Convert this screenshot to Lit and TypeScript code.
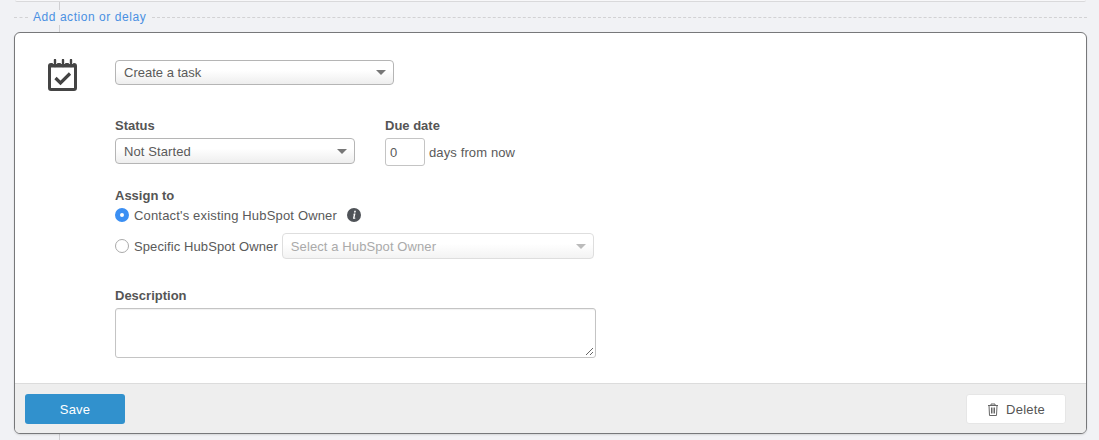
import { LitElement, html, css } from "lit";
import { customElement } from "lit/decorators.js";

@customElement("app-root")
export class AppRoot extends LitElement {
  static styles = css`
    :host {
      display: block;
      position: relative;
      width: 1099px;
      height: 440px;
      overflow: hidden;
      background: #f1f2f5;
      font-family: "Liberation Sans", Arial, sans-serif;
      font-size: 13px;
      color: #5a5a5a;
    }
    .connector {
      position: absolute;
      left: 59px;
      top: 2px;
      bottom: 0;
      width: 1px;
      background: #cfcfd2;
    }
    .prev {
      position: relative;
      box-sizing: border-box;
      height: 2px;
      margin: 0 13px 0 15px;
      background: #f7f7f9;
      border-bottom: 1px solid #d9d9db;
      border-radius: 0 0 4px 4px;
    }
    .add {
      position: relative;
      height: 30px;
      margin: 0 12px 0 14px;
      display: flex;
      align-items: center;
      gap: 5px;
      box-sizing: border-box;
      color: #4a90e2;
      font-size: 12px;
      letter-spacing: 0.55px;
    }
    .add span { background: #f1f2f5; padding: 0 1px 1px 0; }
    .dash { flex: 1; border-top: 1px dashed #d2d2d4; }
    .dash.short { flex: 0 0 14px; }
    .card {
      position: relative;
      margin: 0 12px 0 14px;
      height: 402px;
      box-sizing: border-box;
      background: #fff;
      border: 1px solid #77787a;
      border-radius: 6px;
      box-shadow: 0 1px 2px rgba(0, 0, 0, 0.12);
      display: flex;
      flex-direction: column;
      overflow: hidden;
    }
    .body {
      flex: 1;
      display: flex;
      padding: 27px 0 0 32px;
    }
    .icon { width: 32px; height: 32px; margin: -1px 36px 0 0; flex: none; }
    .icon svg { display: block; }
    .form { display: flex; flex-direction: column; align-items: flex-start; }
    .select {
      box-sizing: border-box;
      height: 26px;
      display: flex;
      align-items: center;
      justify-content: space-between;
      padding: 0 7px 0 8px;
      border: 1px solid #b5b5b5;
      border-radius: 4px;
      background: linear-gradient(#fff 40%, #eeeeee);
      color: #5a5a5a;
      font-size: 13px;
      letter-spacing: 0.1px;
    }
    .select.type { width: 279px; height: 25px; letter-spacing: 0; }
    .select.status { width: 240px; }
    .select.owner {
      width: 312px;
      margin-left: 4px;
      border-color: #dedede;
      color: #aaa;
      background: linear-gradient(#fff 40%, #f3f3f3);
    }
    .caret {
      width: 0;
      height: 0;
      border-left: 5px solid transparent;
      border-right: 5px solid transparent;
      border-top: 5.5px solid #777;
    }
    .owner .caret { border-top-color: #bbb; }
    .row { display: flex; gap: 30px; margin-top: 33px; }
    .label {
      display: block;
      font-weight: bold;
      font-size: 13px;
      line-height: 15px;
      color: #555;
    }
    .field .label { margin-bottom: 5px; }
    .due { display: flex; align-items: center; gap: 4px; letter-spacing: 0.12px; }
    .num {
      box-sizing: border-box;
      width: 40px;
      height: 28px;
      border: 1px solid #c4c4c4;
      border-radius: 3px;
      padding: 0 4px;
      display: flex;
      align-items: center;
      background: #fff;
    }
    .assign { margin-top: 22px; }
    .radio-row {
      display: flex;
      align-items: center;
      letter-spacing: 0.17px;
    }
    .radio-row.first { height: 20px; margin-top: 2px; }
    .radio-row.second { height: 26px; margin-top: 8px; letter-spacing: 0.1px; }
    .radio {
      box-sizing: border-box;
      width: 14px;
      height: 14px;
      border-radius: 50%;
      border: 1px solid #aaa;
      background: #fff;
      margin-right: 5px;
      flex: none;
    }
    .radio.on {
      border: 5px solid #3b8ff3;
    }
    .info {
      width: 14px;
      height: 14px;
      margin-left: 10px;
      display: block;
    }
    .desc { margin-top: 29px; }
    .desc .label { margin-bottom: 5px; }
    .ta {
      position: relative;
      box-sizing: border-box;
      width: 481px;
      height: 50px;
      border: 1px solid #c4c4c4;
      border-radius: 3px;
      box-shadow: inset 0 1px 1px rgba(0, 0, 0, 0.06);
    }
    .grip { position: absolute; right: 1px; bottom: 1px; display: block; }
    .footer {
      height: 50px;
      flex: none;
      box-sizing: border-box;
      border-top: 1px solid #dcdcdc;
      background: #eeeeee;
      display: flex;
      align-items: center;
      justify-content: space-between;
      padding: 0 20px 0 10px;
    }
    .btn {
      box-sizing: border-box;
      height: 30px;
      padding-top: 1px;
      display: flex;
      align-items: center;
      justify-content: center;
      border-radius: 3px;
      font-size: 13px;
      letter-spacing: 0.2px;
    }
    .save { width: 100px; background: #3191cd; color: #fff; font-weight: 500; }
    .delete { width: 100px; background: #fff; border: 1px solid #e6e6e6; color: #555; gap: 7px; }
    .delete svg { display: block; }
  `;

  render() {
    return html`
      <div class="connector"></div>
      <div class="prev"></div>
      <div class="add">
        <div class="dash short"></div>
        <span>Add action or delay</span>
        <div class="dash"></div>
      </div>
      <div class="card">
        <div class="body">
          <div class="icon">
            <svg width="32" height="32" viewBox="0 0 32 32" fill="none">
              <rect x="2.5" y="5.5" width="26" height="25" rx="1.5" stroke="#444" stroke-width="3"/>
              <path d="M2 7.5h27" stroke="#444" stroke-width="2"/>
              <path d="M8 1v4M16 1v4M24 1v4" stroke="#fff" stroke-width="4.4"/>
              <path d="M8 1v6M16 1v6M24 1v6" stroke="#444" stroke-width="2.4" stroke-linecap="round"/>
              <path d="M8.5 19l5 5 9.5-9.5" stroke="#444" stroke-width="3.2"/>
            </svg>
          </div>
          <div class="form">
            <div class="select type">Create a task<span class="caret"></span></div>
            <div class="row">
              <div class="field">
                <div class="label">Status</div>
                <div class="select status">Not Started<span class="caret"></span></div>
              </div>
              <div class="field">
                <div class="label">Due date</div>
                <div class="due"><div class="num">0</div>days from now</div>
              </div>
            </div>
            <div class="assign">
              <div class="label">Assign to</div>
              <div class="radio-row first">
                <span class="radio on"></span>Contact's existing HubSpot Owner
                <svg class="info" viewBox="0 0 14 14">
                  <circle cx="7" cy="7" r="7" fill="#4f5358"/>
                  <path d="M7.3 2.8h1.6l-.3 1.6H7zM6.9 5.6h1.6l-1 4.2h.9l-.2.9H5.9l.9-4.2h-.7z" fill="#fff"/>
                </svg>
              </div>
              <div class="radio-row second">
                <span class="radio"></span>Specific HubSpot Owner
                <div class="select owner">Select a HubSpot Owner<span class="caret"></span></div>
              </div>
            </div>
            <div class="desc">
              <div class="label">Description</div>
              <div class="ta">
                <svg class="grip" width="9" height="9" viewBox="0 0 9 9">
                  <path d="M1 8l7-7M5 8l3-3" stroke="#666" stroke-width="1"/>
                </svg>
              </div>
            </div>
          </div>
        </div>
        <div class="footer">
          <div class="btn save">Save</div>
          <div class="btn delete">
            <svg width="12" height="13" viewBox="0 0 12 13" fill="none" stroke="#666" stroke-width="1">
              <path d="M1 2.5h10M4 2.5V1h4v1.5M2 2.5l.5 10h7l.5-10M4.5 4.5v6M6 4.5v6M7.5 4.5v6"/>
            </svg>
            Delete
          </div>
        </div>
      </div>
    `;
  }
}
